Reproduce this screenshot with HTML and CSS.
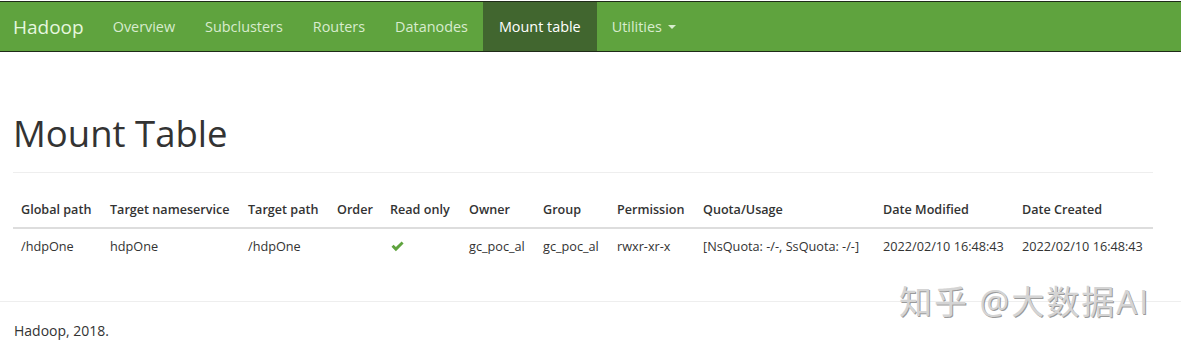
FILE: index.html
```html
<!DOCTYPE html>
<html lang="en">
<head>
    <meta charset="UTF-8">
    <title>Router Information</title>
    <link rel="stylesheet" href="styles.css">
</head>
<body>

<header class="navbar">
    <a class="brand" href="#">Hadoop</a>
    <ul class="nav">
        <li><a href="#">Overview</a></li>
        <li><a href="#">Subclusters</a></li>
        <li><a href="#">Routers</a></li>
        <li><a href="#">Datanodes</a></li>
        <li class="active"><a href="#">Mount table</a></li>
        <li><a href="#">Utilities <span class="caret"></span></a></li>
    </ul>
</header>

<div class="container">
    <div class="page-header">
        <h1>Mount Table</h1>
    </div>

    <table class="table">
        <colgroup>
            <col class="c-global"><col class="c-ns"><col class="c-target"><col class="c-order">
            <col class="c-ro"><col class="c-owner"><col class="c-group"><col class="c-perm">
            <col class="c-quota"><col class="c-mod"><col class="c-created">
        </colgroup>
        <thead>
            <tr>
                <th>Global path</th>
                <th>Target nameservice</th>
                <th>Target path</th>
                <th>Order</th>
                <th>Read only</th>
                <th>Owner</th>
                <th>Group</th>
                <th>Permission</th>
                <th>Quota/Usage</th>
                <th>Date Modified</th>
                <th>Date Created</th>
            </tr>
        </thead>
        <tbody>
            <tr>
                <td>/hdpOne</td>
                <td>hdpOne</td>
                <td>/hdpOne</td>
                <td></td>
                <td>
                    <svg class="ok" width="13" height="11" viewBox="0 0 13 11">
                        <path d="M0.5 5.8 L2.6 3.8 L4.9 6.1 L10.6 0.5 L12.6 2.5 L4.9 10.2 Z" fill="#5fa33e"/>
                    </svg>
                </td>
                <td>gc_poc_al</td>
                <td>gc_poc_al</td>
                <td>rwxr-xr-x</td>
                <td>[NsQuota: -/-, SsQuota: -/-]</td>
                <td>2022/02/10 16:48:43</td>
                <td>2022/02/10 16:48:43</td>
            </tr>
        </tbody>
    </table>
</div>

<footer class="footer">
    <p>Hadoop, 2018.</p>
</footer>

<div class="watermark">知乎 @大数据AI</div>

</body>
</html>
```
FILE: styles.css
```css
body {
    margin: 0;
    font-family: "Open Sans", "Noto Sans CJK SC", sans-serif;
    font-size: 13px;
    color: #333;
    background: #fff;
}
a {
    text-decoration: none;
}
.navbar {
    display: flex;
    align-items: stretch;
    height: 49px;
    margin-top: 1px;
    background-color: #5fa33e;
    border-top: 1px solid #1f2a18;
    border-bottom: 1px solid #1f2a18;
}
.brand {
    display: flex;
    align-items: center;
    padding: 0 14px 0 13px;
    font-size: 19px;
    color: #e6f7df;
}
.nav {
    display: flex;
    margin: 0;
    padding: 0;
    list-style: none;
}
.nav li a {
    display: flex;
    align-items: center;
    height: 100%;
    padding: 0 15px;
    font-size: 14.4px;
    color: #d8ecce;
}
.nav li.active a {
    background-color: #41662f;
    color: #fff;
    padding: 0 16px;
}
.caret {
    display: inline-block;
    width: 0;
    height: 0;
    margin-left: 6px;
    border-top: 4px solid #d8ecce;
    border-left: 4px solid transparent;
    border-right: 4px solid transparent;
}
.container {
    padding: 0 28px 0 13px;
}
.page-header {
    margin-top: 61px;
    padding-bottom: 19px;
    border-bottom: 1px solid #eee;
    margin-bottom: 20px;
}
.page-header h1 {
    margin: 0;
    font-size: 36.5px;
    font-weight: 400;
    line-height: 1.1;
}
.table {
    width: 1140px;
    border-collapse: collapse;
    table-layout: fixed;
}
.c-global { width: 89px; }
.c-ns { width: 138px; }
.c-target { width: 89px; }
.c-order { width: 53px; }
.c-ro { width: 79px; }
.c-owner { width: 74px; }
.c-group { width: 74px; }
.c-perm { width: 86px; }
.c-quota { width: 180px; }
.c-mod { width: 139px; }
.c-created { width: 139px; }
.table th, .table td {
    padding: 8px;
    text-align: left;
    white-space: nowrap;
    line-height: 18px;
}
.table th {
    font-size: 12.6px;
    font-weight: 600;
    border-bottom: 2px solid #ddd;
}
.table td {
    font-size: 12.7px;
    padding-bottom: 7px;
}
.ok {
    display: inline-block;
    vertical-align: -1px;
    margin-left: 1px;
}
.footer {
    margin-top: 39px;
    border-top: 1px solid #eee;
    padding: 0 14px;
}
.footer p {
    margin: 19px 0;
    font-size: 14px;
}
.watermark {
    position: absolute;
    left: 899px;
    top: 276px;
    font-size: 33px;
    letter-spacing: 2px;
    color: #d4d4d4;
    text-shadow: 1px 1px 0 #9a9a9a;
}
```
